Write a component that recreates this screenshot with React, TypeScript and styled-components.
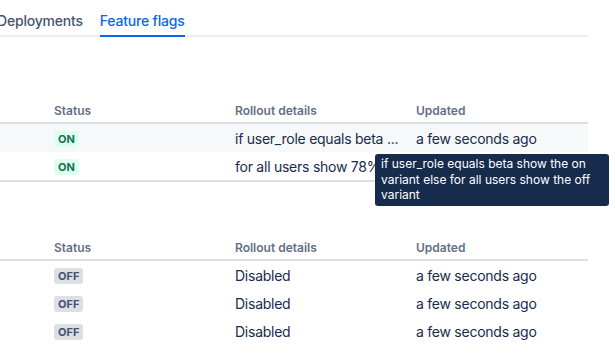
import React from "react";
import styled, { createGlobalStyle } from "styled-components";

const GlobalStyle = createGlobalStyle`
  body {
    margin: 0;
    background: #ffffff;
    font-family: Inter, "Noto Sans", sans-serif;
    color: #172b4d;
    overflow: hidden;
  }
`;

type Flag = {
  on: boolean,
  rollout: string,
  updated: string,
  hovered?: boolean,
};

const enabledFlags: Flag[] = [
  { on: true, rollout: "if user_role equals beta ...", updated: "a few seconds ago", hovered: true },
  { on: true, rollout: "for all users show 78% on", updated: "a few seconds ago" },
];

const disabledFlags: Flag[] = [
  { on: false, rollout: "Disabled", updated: "a few seconds ago" },
  { on: false, rollout: "Disabled", updated: "a few seconds ago" },
  { on: false, rollout: "Disabled", updated: "a few seconds ago" },
];

const Page = styled.div`
  width: 588px;
  position: relative;
`;

const TabBar = styled.div`
  display: flex;
  gap: 17px;
  height: 35px;
  border-bottom: 2px solid #ebecf0;
`;

const Tab = styled.div<{ $active?: boolean }>`
  box-sizing: border-box;
  height: 37px;
  padding-top: 11px;
  margin-bottom: -2px;
  font-size: 14px;
  font-weight: 500;
  letter-spacing: -0.2px;
  line-height: 20px;
  color: ${(p) => (p.$active ? "#0c66e4" : "#44546f")};
  border-bottom: 2px solid ${(p) => (p.$active ? "#0c66e4" : "transparent")};
  white-space: nowrap;

  &:first-child {
    margin-left: -3px;
  }
`;

const Table = styled.div<{ $top: number }>`
  margin-top: ${(p) => p.$top}px;
`;

const Columns = styled.div`
  display: grid;
  grid-template-columns: 54px 181px 181px 1fr;
  align-items: center;
`;

const HeadRow = styled(Columns)`
  height: 24px;
  border-bottom: 2px solid #dcdfe4;
`;

const HeadCell = styled.div`
  font-size: 12px;
  font-weight: 600;
  color: #626f86;
`;

const Row = styled(Columns)<{ $hovered?: boolean }>`
  height: 28px;
  background: ${(p) => (p.$hovered ? "#f7f8f9" : "transparent")};
`;

const Cell = styled.div`
  font-size: 14px;
  letter-spacing: -0.25px;
  color: #172b4d;
  white-space: nowrap;
  overflow: hidden;
`;

const Foot = styled.div`
  border-top: 2px solid #dcdfe4;
`;

const Lozenge = styled.span<{ $on: boolean }>`
  display: inline-block;
  padding: 0 4px;
  height: 16px;
  line-height: 16px;
  border-radius: 3px;
  font-size: 11px;
  font-weight: 700;
  letter-spacing: 0;
  text-transform: uppercase;
  background: ${(p) => (p.$on ? "#dcfff1" : "#dcdfe4")};
  color: ${(p) => (p.$on ? "#216e4e" : "#44546f")};
`;

const Tooltip = styled.div`
  position: absolute;
  left: 375px;
  top: 154px;
  width: 234px;
  box-sizing: border-box;
  padding: 2px 6px 3px;
  background: #172b4d;
  color: #ffffff;
  font-size: 12px;
  line-height: 15.5px;
  border-radius: 3px;
  z-index: 2;
`;

const FlagTable = ({ flags, top, footer }: { flags: Flag[], top: number, footer?: boolean }) => (
  <Table $top={top}>
    <HeadRow>
      <div />
      <HeadCell>Status</HeadCell>
      <HeadCell>Rollout details</HeadCell>
      <HeadCell>Updated</HeadCell>
    </HeadRow>
    {flags.map((f, i) => (
      <Row key={i} $hovered={f.hovered}>
        <div />
        <Cell><Lozenge $on={f.on}>{f.on ? "On" : "Off"}</Lozenge></Cell>
        <Cell>{f.rollout}</Cell>
        <Cell>{f.updated}</Cell>
      </Row>
    ))}
    {footer && <Foot />}
  </Table>
);

const App = () => (
  <Page>
    <GlobalStyle />
    <TabBar>
      <Tab>Deployments</Tab>
      <Tab $active>Feature flags</Tab>
    </TabBar>
    <FlagTable flags={enabledFlags} top={61} footer />
    <FlagTable flags={disabledFlags} top={53} />
    <Tooltip>
      if user_role equals beta show the on variant else for all users show the off variant
    </Tooltip>
  </Page>
);

export default App;
